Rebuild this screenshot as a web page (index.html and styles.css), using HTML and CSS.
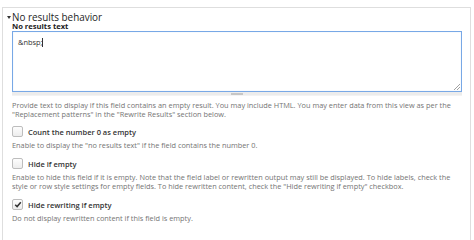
FILE: index.html
```html
<!DOCTYPE html>
<html>
<head>
<meta charset="utf-8">
<link rel="stylesheet" href="styles.css">
</head>
<body>
<div class="panel">
  <div class="legend"><span class="caret"></span>No results behavior</div>
  <div class="item">
    <div class="lbl">No results text</div>
    <div class="ta">&amp;nbsp;<span class="cursor"></span>
      <svg class="resize" width="6" height="6" viewBox="0 0 6 6"><path d="M6 0 L0 6 M6 3 L3 6" stroke="#8a8a8a" stroke-width="0.8" fill="none"/></svg>
    </div>
    <div class="grip"><span></span></div>
    <div class="desc">Provide text to display if this field contains an empty result. You may include HTML. You may enter data from this view as per the "Replacement patterns" in the "Rewrite Results" section below.</div>
  </div>
  <div class="check-item">
    <div class="row"><span class="box"></span><span class="clabel">Count the number 0 as empty</span></div>
    <div class="desc">Enable to display the "no results text" if the field contains the number 0.</div>
  </div>
  <div class="check-item">
    <div class="row"><span class="box"></span><span class="clabel">Hide if empty</span></div>
    <div class="desc">Enable to hide this field if it is empty. Note that the field label or rewritten output may still be displayed. To hide labels, check the style or row style settings for empty fields. To hide rewritten content, check the "Hide rewriting if empty" checkbox.</div>
  </div>
  <div class="check-item">
    <div class="row"><span class="box checked"><svg width="8" height="7" viewBox="0 0 8 7"><path d="M1.2 3.8 L3.1 5.6 L6.8 1.2" stroke="#333" stroke-width="1.5" fill="none"/></svg></span><span class="clabel">Hide rewriting if empty</span></div>
    <div class="desc">Do not display rewritten content if this field is empty.</div>
  </div>
</div>
</body>
</html>
```

FILE: styles.css
```css
html, body {
  margin: 0;
  padding: 0;
  background: #fff;
}
body {
  font-family: "Open Sans", "DejaVu Sans", sans-serif;
  color: #222;
  overflow: hidden;
}
.panel {
  margin: 7px 3px 0 2px;
  border: 1px solid #dedede;
  border-bottom: none;
  padding: 3px 8px 0 9px;
  height: 240px;
}
.legend {
  font-size: 9.9px;
  line-height: 12px;
  height: 12px;
  color: #1e1e1e;
  display: flex;
  align-items: center;
}
.caret {
  width: 0;
  height: 0;
  border-left: 2.2px solid transparent;
  border-right: 2.2px solid transparent;
  border-top: 3px solid #333;
  margin-left: -5px;
  margin-right: 1px;
}
.lbl {
  font-size: 7.6px;
  font-weight: 700;
  line-height: 7px;
  margin-bottom: 1px;
  color: #222;
}
.ta {
  position: relative;
  box-sizing: border-box;
  height: 61px;
  border: 1px solid #78a8e6;
  box-shadow: inset 0 0 1px #b9d3f3;
  padding: 5px 5px;
  font-size: 7.4px;
  line-height: 10px;
  color: #333;
}
.cursor {
  display: inline-block;
  width: 1px;
  height: 9px;
  background: #333;
  vertical-align: -2px;
}
.resize {
  position: absolute;
  right: 1px;
  bottom: 1px;
}
.grip {
  height: 3px;
  background: #ececec;
  border-bottom: 1px solid #f3f3f3;
  display: flex;
  justify-content: center;
  align-items: center;
}
.grip span {
  width: 12px;
  height: 2px;
  background: #c6c6c6;
}
.desc {
  font-size: 7.35px;
  line-height: 9px;
  color: #747474;
  margin-top: 4px;
}
.item .desc {
  margin-top: 5px;
}
.check-item {
  margin-top: 8px;
}
.item + .check-item {
  margin-top: 7px;
}
.row {
  display: flex;
  align-items: center;
  height: 11px;
}
.box {
  box-sizing: border-box;
  width: 11px;
  height: 11px;
  border: 1px solid #bdbdbd;
  border-radius: 2px;
  background: linear-gradient(#fdfdfd, #ededed);
  display: flex;
  align-items: center;
  justify-content: center;
  margin-right: 5px;
}
.clabel {
  font-size: 7.5px;
  font-weight: 600;
  color: #333;
}
```
